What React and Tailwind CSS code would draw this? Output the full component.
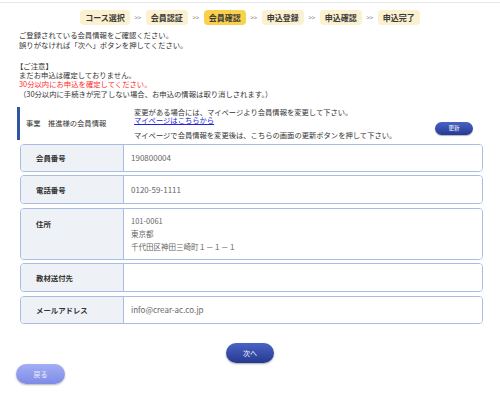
import React from "react";

const font = { fontFamily: '"Noto Sans CJK JP", "Noto Sans", sans-serif' };

function Step({ label, active }) {
  return (
    <div
      className={`h-[15px] px-[5px] flex items-center rounded-[4px] text-[8px] font-semibold text-[#3a3a3a] ${
        active ? "bg-[#fbd14b]" : "bg-[#fbf0cf]"
      }`}
    >
      {label}
    </div>
  );
}

function Sep() {
  return <div className="text-[6px] text-[#777] w-[9px] text-center">&gt;&gt;</div>;
}

function Row({ label, children, tall }) {
  return (
    <div className="flex-1 flex border border-[#a9bde2] rounded-[4px] overflow-hidden">
      <div
        className={`w-[103px] shrink-0 bg-[#eef2f7] border-r border-[#a9bde2] pl-[15px] text-[7.4px] font-bold text-[#333] flex ${
          tall ? "items-start pt-[9px]" : "items-center"
        }`}
      >
        {label}
      </div>
      <div className="flex-1 pl-[7px] text-[8px] text-[#666] bg-white flex flex-col justify-center">
        {children}
      </div>
    </div>
  );
}

export default function App() {
  return (
    <div className="w-[500px] h-[396px] bg-white overflow-hidden relative" style={font}>
      <div className="h-[3px] border-b border-[#e4e6ea]" />
      <div className="flex justify-center items-center gap-[3.5px] mt-[7px]">
        <Step label="コース選択" />
        <Sep />
        <Step label="会員認証" />
        <Sep />
        <Step label="会員確認" active />
        <Sep />
        <Step label="申込登録" />
        <Sep />
        <Step label="申込確認" />
        <Sep />
        <Step label="申込完了" />
      </div>

      <div className="pl-[19px] mt-[5px] text-[7.35px] text-[#333]">
        <div className="leading-[10px]">
          <div>ご登録されている会員情報をご確認ください。</div>
          <div>誤りがなければ「次へ」ボタンを押してください。</div>
        </div>
        <div className="leading-[9.2px] mt-[11px]">
          <div className="-ml-[3px]">【ご注意】</div>
          <div>まだお申込は確定しておりません。</div>
          <div className="text-[#ff2a2a]">30分以内にお申込を確定してください。</div>
          <div>（30分以内に手続きが完了しない場合、お申込の情報は取り消しされます。）</div>
        </div>
      </div>

      <div className="flex items-stretch ml-[17px] mr-[17px] mt-[9px] h-[33px]">
        <div className="w-[3px] bg-[#2f55a4]" />
        <div className="w-[114px] pl-[6px] flex items-center text-[7.3px] text-[#333]">
          事業　推進様の会員情報
        </div>
        <div className="flex-1 text-[7.3px] text-[#333] pt-[1px]">
          <div className="leading-[8.5px]">変更がある場合には、マイページより会員情報を変更して下さい。</div>
          <div className="leading-[8.5px] text-[#2323d8] underline">マイページはこちらから</div>
          <div className="leading-[8.5px] mt-[6px]">マイページで会員情報を変更後は、こちらの画面の更新ボタンを押して下さい。</div>
        </div>
        <div className="flex items-center pr-[10px] pt-[15px] pb-[5px]">
          <div className="w-[38px] h-[13px] rounded-full bg-gradient-to-b from-[#4a63c4] to-[#263a94] text-white text-[5.5px] flex items-center justify-center shadow-[0_1px_1px_rgba(0,0,0,0.3)]">
            更新
          </div>
        </div>
      </div>

      <div className="ml-[20px] w-[463px] mt-[4px] flex flex-col gap-[3.5px]">
        <div className="h-[28px] flex flex-col">
          <Row label="会員番号">190800004</Row>
        </div>
        <div className="h-[29px] flex flex-col">
          <Row label="電話番号">0120-59-1111</Row>
        </div>
        <div className="h-[52px] flex flex-col">
          <Row label="住所" tall>
            <div className="leading-[13px] text-[7.5px]">
              <div>101-0061</div>
              <div>東京都</div>
              <div>千代田区神田三崎町１－１－１</div>
            </div>
          </Row>
        </div>
        <div className="h-[29px] flex flex-col">
          <Row label="教材送付先"></Row>
        </div>
        <div className="h-[28px] flex flex-col">
          <Row label="メールアドレス">info@crear-ac.co.jp</Row>
        </div>
      </div>

      <div className="flex justify-center mt-[19px]">
        <div className="w-[48px] h-[20px] rounded-full bg-gradient-to-b from-[#4b63c6] to-[#25398f] text-white text-[7px] flex items-center justify-center shadow-[0_1px_2px_rgba(0,0,0,0.35)]">
          次へ
        </div>
      </div>
      <div className="ml-[16px] mt-[1px]">
        <div className="w-[49px] h-[20px] rounded-full bg-gradient-to-b from-[#a3aef5] to-[#7d8be6] text-[#eef0ff] text-[7px] flex items-center justify-center shadow-[0_1px_2px_rgba(0,0,0,0.3)]">
          戻る
        </div>
      </div>
    </div>
  );
}
